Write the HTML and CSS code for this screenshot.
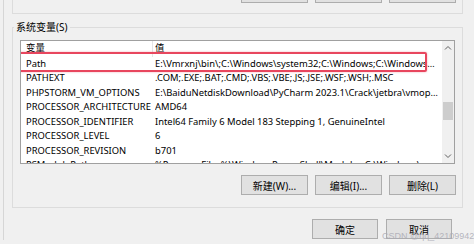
FILE: index.html
```html
<!DOCTYPE html>
<html lang="zh-CN">
<head>
    <meta charset="UTF-8">
    <meta name="viewport" content="width=device-width, initial-scale=1.0">
    <title>环境变量</title>
    <link rel="stylesheet" href="styles.css">
</head>
<body>

    <div class="frame">
        <div class="user-group">
            <div class="btn-row top-btns">
                <button class="btn">新建(N)...</button>
                <button class="btn">编辑(E)...</button>
                <button class="btn">删除(D)</button>
            </div>
        </div>

        <div class="sys-group">
            <div class="legend">系统变量(S)</div>

            <div class="listbox">
                <div class="list-body">
                    <div class="row header">
                        <span class="name">变量</span>
                        <span class="value">值</span>
                    </div>
                    <div class="row">
                        <span class="name">Path</span>
                        <span class="value">E:\Vmrxnj\bin\;C:\Windows\system32;C:\Windows;C:\Windows\System32\Wbem</span>
                    </div>
                    <div class="row">
                        <span class="name">PATHEXT</span>
                        <span class="value">.COM;.EXE;.BAT;.CMD;.VBS;.VBE;.JS;.JSE;.WSF;.WSH;.MSC</span>
                    </div>
                    <div class="row">
                        <span class="name">PHPSTORM_VM_OPTIONS</span>
                        <span class="value">E:\BaiduNetdiskDownload\PyCharm 2023.1\Crack\jetbra\vmoptions\phpstorm.vmoptions</span>
                    </div>
                    <div class="row">
                        <span class="name">PROCESSOR_ARCHITECTURE</span>
                        <span class="value">AMD64</span>
                    </div>
                    <div class="row">
                        <span class="name">PROCESSOR_IDENTIFIER</span>
                        <span class="value">Intel64 Family 6 Model 183 Stepping 1, GenuineIntel</span>
                    </div>
                    <div class="row">
                        <span class="name">PROCESSOR_LEVEL</span>
                        <span class="value">6</span>
                    </div>
                    <div class="row">
                        <span class="name">PROCESSOR_REVISION</span>
                        <span class="value">b701</span>
                    </div>
                    <div class="row">
                        <span class="name">PSModulePath</span>
                        <span class="value">%ProgramFiles%\WindowsPowerShell\Modules;C:\Windows\system32</span>
                    </div>
                </div>

                <div class="scrollbar">
                    <svg class="arrow" width="8" height="5" viewBox="0 0 8 5"><path d="M1 4.5 L4 1.5 L7 4.5" fill="none" stroke="#606060" stroke-width="1"/></svg>
                    <div class="track"><div class="thumb"></div></div>
                    <svg class="arrow" width="8" height="5" viewBox="0 0 8 5"><path d="M1 0.5 L4 3.5 L7 0.5" fill="none" stroke="#606060" stroke-width="1"/></svg>
                </div>

                <div class="highlight"></div>
            </div>

            <div class="btn-row">
                <button class="btn">新建(W)...</button>
                <button class="btn">编辑(I)...</button>
                <button class="btn">删除(L)</button>
            </div>
        </div>

        <div class="btn-row dialog-btns">
            <button class="btn">确定</button>
            <button class="btn">取消</button>
        </div>
    </div>

    <div class="watermark">CSDN @qq_42109942</div>

</body>
</html>
```

FILE: styles.css
```css
html, body {
    margin: 0;
    width: 474px;
    height: 244px;
    overflow: hidden;
    background-color: #f0f0f0;
    font-family: "Noto Sans", "Noto Sans CJK SC", sans-serif;
    font-size: 9.4px;
    color: #000;
}
.frame {
    margin-left: 3px;
    border-left: 1px solid #d6d6d6;
    padding-left: 8px;
    height: 240px;
}
.user-group {
    display: flow-root;
    box-sizing: border-box;
    width: 451px;
    height: 14px;
    border: 1px solid #dcdcdc;
    border-top: none;
}
.btn-row {
    display: flex;
    justify-content: flex-end;
    gap: 7px;
    padding-right: 6px;
}
.top-btns {
    margin-top: -17px;
}
.btn {
    box-sizing: border-box;
    width: 67px;
    height: 20px;
    padding: 0;
    background-color: #e1e1e1;
    border: 1px solid #adadad;
    border-radius: 0;
    font-family: inherit;
    font-size: 10px;
    color: #000;
}
.sys-group {
    display: flow-root;
    box-sizing: border-box;
    width: 451px;
    margin-top: 13px;
    border: 1px solid #dcdcdc;
    padding-bottom: 12px;
}
.legend {
    width: fit-content;
    margin: -8px 0 0 1px;
    padding: 0 2px;
    line-height: 14px;
    font-size: 10px;
    background-color: #f0f0f0;
}
.listbox {
    position: relative;
    box-sizing: border-box;
    height: 124px;
    margin: 6px 7px 0 7px;
    border: 1px solid #a0a0a0;
    background: white;
    display: flex;
    overflow: hidden;
}
.list-body {
    flex: 1;
    min-width: 0;
}
.row {
    display: flex;
    height: 14.5px;
    line-height: 14.5px;
    white-space: nowrap;
}
.row.header {
    height: 15.5px;
    line-height: 13px;
}
.name {
    box-sizing: border-box;
    width: 134px;
    flex-shrink: 0;
    padding-left: 5px;
    overflow: hidden;
}
.value {
    box-sizing: border-box;
    width: 283px;
    flex-shrink: 0;
    padding-left: 0;
    overflow: hidden;
    text-overflow: ellipsis;
}
.header .name {
    border-right: 1px solid #e5e5e5;
    width: 132px;
    margin-right: 2px;
}
.scrollbar {
    width: 12px;
    flex-shrink: 0;
    background-color: #f0f0f0;
    display: flex;
    flex-direction: column;
    align-items: center;
}
.arrow {
    margin: 4px 0;
}
.track {
    flex: 1;
    width: 100%;
    padding-top: 48px;
}
.thumb {
    width: 10px;
    height: 18px;
    margin: 0 auto;
    background-color: #cdcdcd;
}
.highlight {
    position: absolute;
    left: -4px;
    top: 11px;
    box-sizing: border-box;
    width: 410px;
    height: 20px;
    border: 2px solid #e8465e;
    border-radius: 2px;
    box-shadow: 0 0 2px rgba(232, 70, 94, 0.5);
}
.sys-group .btn-row {
    margin-top: 11px;
}
.dialog-btns {
    width: 451px;
    box-sizing: border-box;
    margin-top: 11px;
    gap: 8px;
    padding-right: 11px;
}
.dialog-btns .btn {
    width: 66px;
}
.watermark {
    position: absolute;
    left: 382px;
    top: 231px;
    white-space: nowrap;
    font-family: "Liberation Sans", sans-serif;
    font-size: 9px;
    color: rgba(170, 170, 180, 0.85);
}
```
